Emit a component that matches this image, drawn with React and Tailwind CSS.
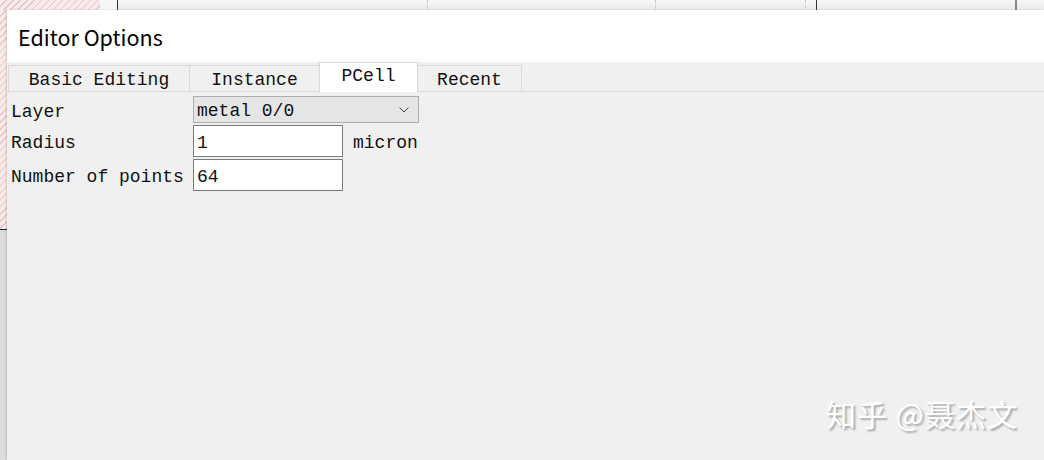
import React from 'react';

const mono = { fontFamily: '"Liberation Mono", "Courier New", monospace' };

const tabs = ['Basic Editing', 'Instance', 'PCell', 'Recent'];
const tabWidths = ['w-[182px]', 'w-[131px]', 'w-[99px]', 'w-[105px]'];

const App = () => {
  return (
    <div className="w-[1044px] h-[460px] overflow-hidden flex flex-col bg-[#f4f4f4]">
      {/* canvas strip behind the dialog */}
      <div className="h-[10px] flex shrink-0">
        <div className="w-[100px] bg-[repeating-linear-gradient(135deg,#f7eaea_0px,#f7eaea_4px,#e7c4c4_4px,#e7c4c4_5px)]" />
        <div className="w-[18px] bg-[#f6f6f6] border-r border-[#333]" />
        <div className="flex-1 flex bg-[linear-gradient(#f7f7f7,#e9e9e9)]">
          <div className="w-[310px] border-r border-dotted border-[#bbb]" />
          <div className="w-[228px] border-r border-dotted border-[#bbb]" />
          <div className="w-[150px] border-r border-dotted border-[#bbb]" />
          <div className="w-[11px] border-r border-[#333]" />
          <div className="w-[200px] border-r-2 border-[#888]" />
        </div>
      </div>
      <div className="flex flex-1">
        {/* left canvas strip */}
        <div className="w-[7px] flex flex-col shrink-0">
          <div className="h-[220px] bg-[repeating-linear-gradient(135deg,#f7eaea_0px,#f7eaea_4px,#e7c4c4_4px,#e7c4c4_5px)] border-b border-[#222]" />
          <div className="flex-1 bg-[#dcdcdc]" />
        </div>

        {/* dialog */}
        <div className="flex-1 flex flex-col bg-[#f0f0f0] shadow-[-1px_0_2px_rgba(0,0,0,0.15)]">
          <div className="h-[52px] bg-white flex items-center pl-[11px] pt-[2px]">
            <span
              className="text-[21.5px] text-black"
              style={{ fontFamily: '"Noto Sans CJK SC", "Noto Sans", sans-serif' }}
            >
              Editor Options
            </span>
          </div>

          <div className="flex items-end h-[30px] pl-[1px] border-b border-[#d9d9d9]">
            {tabs.map((t, i) => {
              const active = t === 'PCell';
              return (
                <div
                  key={t}
                  className={`${tabWidths[i]} flex items-center justify-center text-[18px] text-[#111] border border-b-0 ${
                    active
                      ? 'h-[30px] bg-white border-[#d9d9d9] -mb-px -ml-px pb-[3px]'
                      : 'h-[26px] bg-[#f0f0f0] border-[#d9d9d9] -ml-px pt-[3px]'
                  } ${i === 0 ? 'ml-0' : ''}`}
                  style={mono}
                >
                  {t}
                </div>
              );
            })}
          </div>

          <div className="flex-1 relative pt-[4px] pl-[4px]" style={mono}>
            <div className="grid grid-cols-[182px_150px_auto] grid-rows-[27px_32px_32px] gap-y-[2px] items-center text-[18px] text-[#111] leading-none">
              <span className="translate-y-[2px]">Layer</span>
              <div className="col-span-2 w-[226px] h-[27px] bg-[#e5e5e5] border border-[#adadad] flex items-center justify-between pl-[3px] pr-[8px]">
                <span className="translate-y-[1px]">metal 0/0</span>
                <svg width="12" height="8" viewBox="0 0 12 8" fill="none">
                  <path d="M1.5 1.5 L6 6 L10.5 1.5" stroke="#444" strokeWidth="1" />
                </svg>
              </div>

              <span className="translate-y-[2px]">Radius</span>
              <div className="w-[150px] h-[32px] bg-white border border-[#7a7a7a] flex items-center pl-[3px]">
                <span className="translate-y-[2px]">1</span>
              </div>
              <span className="pl-[10px] translate-y-[2px]">micron</span>

              <span className="whitespace-nowrap translate-y-[2px]">Number of points</span>
              <div className="w-[150px] h-[32px] bg-white border border-[#7a7a7a] flex items-center pl-[3px]">
                <span className="translate-y-[2px]">64</span>
              </div>
              <span />
            </div>

            {/* watermark */}
            <div
              className="absolute right-[26px] bottom-[24px] text-[30px] tracking-[1px] text-white [text-shadow:2px_2px_2px_rgba(0,0,0,0.3)] whitespace-pre"
              style={{ fontFamily: '"Noto Sans CJK SC", sans-serif' }}
            >
              知乎 @聂杰文
            </div>
          </div>
        </div>
      </div>
    </div>
  );
};

export default App;
